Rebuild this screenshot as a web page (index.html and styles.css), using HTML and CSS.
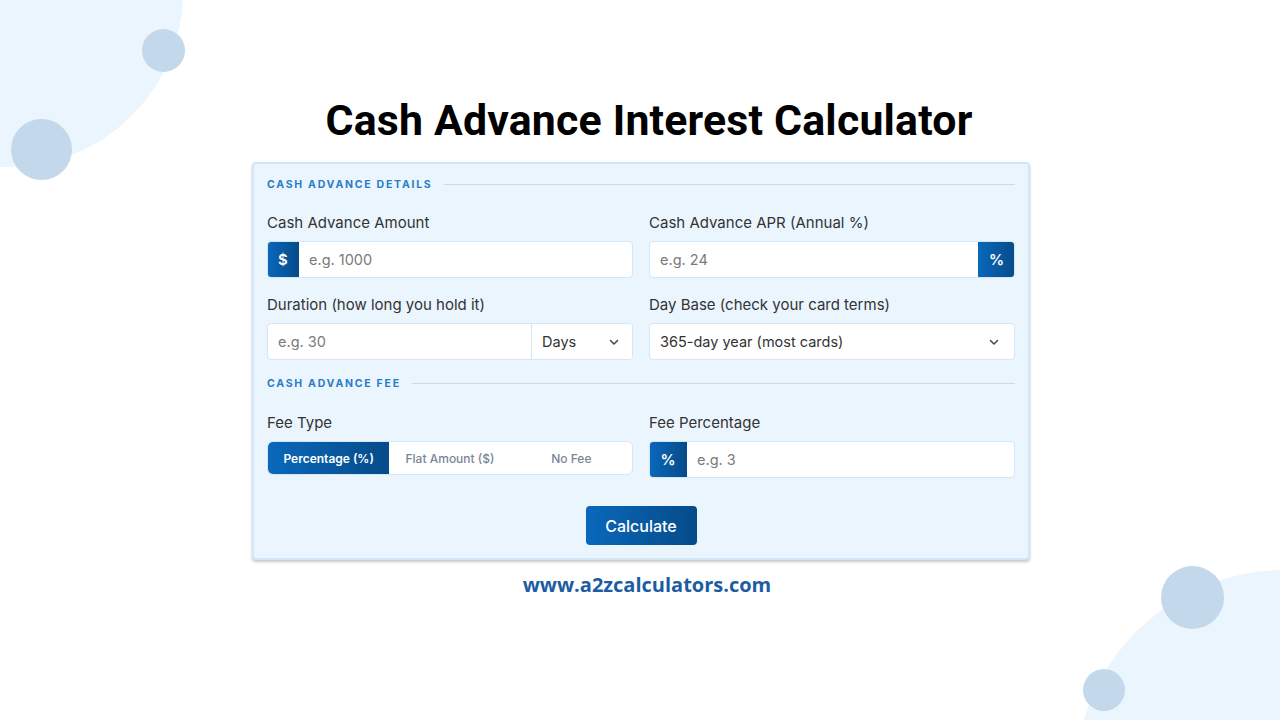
FILE: index.html
```html
<!DOCTYPE html>
<html lang="en">
<head>
<meta charset="utf-8">
<title>Cash Advance Interest Calculator</title>
<link rel="stylesheet" href="styles.css">
</head>
<body>
<div class="backdrop">
  <div class="deco deco-tl-big"></div>
  <div class="deco dot dot-tl-1"></div>
  <div class="deco dot dot-tl-2"></div>
  <div class="deco deco-br-big"></div>
  <div class="deco dot dot-br-1"></div>
  <div class="deco dot dot-br-2"></div>
</div>

<main class="page">
  <h1 class="title">Cash Advance Interest Calculator</h1>

  <section class="card">
    <div class="section-head"><span>CASH ADVANCE DETAILS</span><i class="rule"></i></div>

    <div class="grid">
      <div class="field">
        <label class="label">Cash Advance Amount</label>
        <div class="group">
          <span class="addon addon-left">$</span>
          <input class="input" type="text" placeholder="e.g. 1000">
        </div>
      </div>
      <div class="field">
        <label class="label">Cash Advance APR (Annual %)</label>
        <div class="group">
          <input class="input" type="text" placeholder="e.g. 24">
          <span class="addon addon-right">%</span>
        </div>
      </div>

      <div class="field">
        <label class="label">Duration (how long you hold it)</label>
        <div class="group">
          <input class="input" type="text" placeholder="e.g. 30">
          <div class="select select-days"><span>Days</span><svg class="chev" viewBox="0 0 12 12" width="12" height="12"><path d="M2.5 4.5 L6 8 L9.5 4.5" fill="none" stroke="#444" stroke-width="1.5" stroke-linecap="round" stroke-linejoin="round"/></svg></div>
        </div>
      </div>
      <div class="field">
        <label class="label">Day Base (check your card terms)</label>
        <div class="select select-full"><span>365-day year (most cards)</span><svg class="chev" viewBox="0 0 12 12" width="12" height="12"><path d="M2.5 4.5 L6 8 L9.5 4.5" fill="none" stroke="#444" stroke-width="1.5" stroke-linecap="round" stroke-linejoin="round"/></svg></div>
      </div>
    </div>

    <div class="section-head head-2"><span>CASH ADVANCE FEE</span><i class="rule"></i></div>

    <div class="grid grid-fee">
      <div class="field">
        <label class="label">Fee Type</label>
        <div class="segmented">
          <button class="seg active">Percentage (%)</button>
          <button class="seg">Flat Amount ($)</button>
          <button class="seg">No Fee</button>
        </div>
      </div>
      <div class="field">
        <label class="label">Fee Percentage</label>
        <div class="group">
          <span class="addon addon-left addon-wide">%</span>
          <input class="input" type="text" placeholder="e.g. 3">
        </div>
      </div>
    </div>

    <div class="actions">
      <button class="calc">Calculate</button>
    </div>
  </section>

  <p class="footer">www.a2zcalculators.com</p>
</main>
</body>
</html>
```

FILE: styles.css
```css
* { box-sizing: border-box; }

html, body {
  margin: 0;
  padding: 0;
  width: 1280px;
  height: 720px;
  overflow: hidden;
  background: #ffffff;
  font-family: "Inter", "Noto Sans", Arial, sans-serif;
  position: relative;
}

.backdrop {
  position: absolute;
  left: 0;
  top: 0;
  width: 1280px;
  height: 720px;
  overflow: hidden;
  z-index: 0;
}

.deco { position: absolute; border-radius: 50%; }
.deco-tl-big { left: -167px; top: -183px; width: 350px; height: 350px; background: #ebf5fe; }
.deco-br-big { left: 1075px; top: 570px; width: 420px; height: 420px; background: #ebf5fe; }
.dot { background: #c3d8eb; }
.dot-tl-1 { left: 142px; top: 29px; width: 43px; height: 43px; }
.dot-tl-2 { left: 11px; top: 119px; width: 61px; height: 61px; }
.dot-br-1 { left: 1161px; top: 566px; width: 63px; height: 63px; }
.dot-br-2 { left: 1083px; top: 669px; width: 42px; height: 42px; }

.page {
  position: relative;
  z-index: 1;
  display: flex;
  flex-direction: column;
  align-items: center;
  padding-top: 96px;
}

.title {
  margin: 0;
  padding-left: 18px;
  font-family: "Roboto", "Liberation Sans", Arial, sans-serif;
  font-weight: 700;
  font-size: 42.8px;
  line-height: 48px;
  color: #000;
  letter-spacing: 0.2px;
}

.card {
  margin-top: 18px;
  margin-left: 2px;
  width: 778px;
  background: #ebf5fe;
  border: 2px solid #d3e6f7;
  border-radius: 4px;
  box-shadow: 0 2px 3px rgba(0, 0, 0, 0.22);
  padding: 13px;
}

.section-head {
  display: flex;
  align-items: center;
  gap: 11px;
  height: 14px;
}
.section-head span {
  font-size: 10.5px;
  font-weight: 700;
  letter-spacing: 1.75px;
  color: #2a7cc6;
  white-space: nowrap;
}
.section-head .rule {
  flex: 1;
  height: 1px;
  background: #c5dcf0;
}
.head-2 { margin-top: 16px; }

.grid {
  display: grid;
  grid-template-columns: 366px 366px;
  column-gap: 16px;
  row-gap: 17px;
  margin-top: 22px;
}
.grid-fee { margin-top: 23px; }

.field { display: flex; flex-direction: column; }

.label {
  font-size: 15px;
  line-height: 19px;
  color: #333333;
  margin-bottom: 9px;
}

.group {
  display: flex;
  height: 37px;
  border-radius: 4px;
  background: #fff;
  border: 1px solid #d3e6f7;
  overflow: hidden;
}

.addon {
  display: flex;
  align-items: center;
  justify-content: center;
  width: 32px;
  flex: none;
  color: #fff;
  font-size: 15px;
  font-weight: 600;
  background: linear-gradient(90deg, #0a68bb 0%, #064b89 100%);
  margin: -1px 0 -1px -1px;
}
.addon-right { width: 37px; margin: -1px -1px -1px 0; }
.addon-wide { width: 38px; }

.input {
  flex: 1;
  min-width: 0;
  border: none;
  outline: none;
  background: transparent;
  font-family: inherit;
  font-size: 14.5px;
  color: #333;
  padding: 0 10px;
}
.input::placeholder { color: #7a7a7a; }

.select {
  display: flex;
  align-items: center;
  justify-content: space-between;
  font-size: 14.5px;
  color: #333;
  background: #fff;
}
.select-days {
  width: 101px;
  flex: none;
  border-left: 1px solid #d3e6f7;
  padding: 0 12px 0 10px;
}
.select-full {
  height: 37px;
  border: 1px solid #d3e6f7;
  border-radius: 4px;
  padding: 0 14px 0 10px;
}
.chev { display: block; }

.segmented {
  display: grid;
  grid-template-columns: 1fr 1fr 1fr;
  height: 34px;
  border: 1px solid #d3e6f7;
  border-radius: 6px;
  background: #fff;
  overflow: hidden;
}
.seg {
  border: none;
  background: transparent;
  font-family: inherit;
  font-size: 12px;
  font-weight: 500;
  color: #7a8595;
  padding: 0;
  cursor: pointer;
}
.seg.active {
  color: #fff;
  font-weight: 600;
  background: linear-gradient(90deg, #0a68bb 0%, #064b89 100%);
}

.actions {
  display: flex;
  justify-content: center;
  margin-top: 28px;
}
.calc {
  width: 111px;
  height: 39px;
  border: none;
  border-radius: 4px;
  background: linear-gradient(90deg, #0a68bb 0%, #064b89 100%);
  color: #fff;
  font-family: inherit;
  font-size: 16px;
  font-weight: 500;
  cursor: pointer;
}

.footer {
  margin: 11px 0 0 0;
  padding-left: 14px;
  font-family: "Open Sans", "Liberation Sans", Arial, sans-serif;
  font-weight: 700;
  font-size: 20px;
  line-height: 28px;
  color: #1c5ca2;
}
```
